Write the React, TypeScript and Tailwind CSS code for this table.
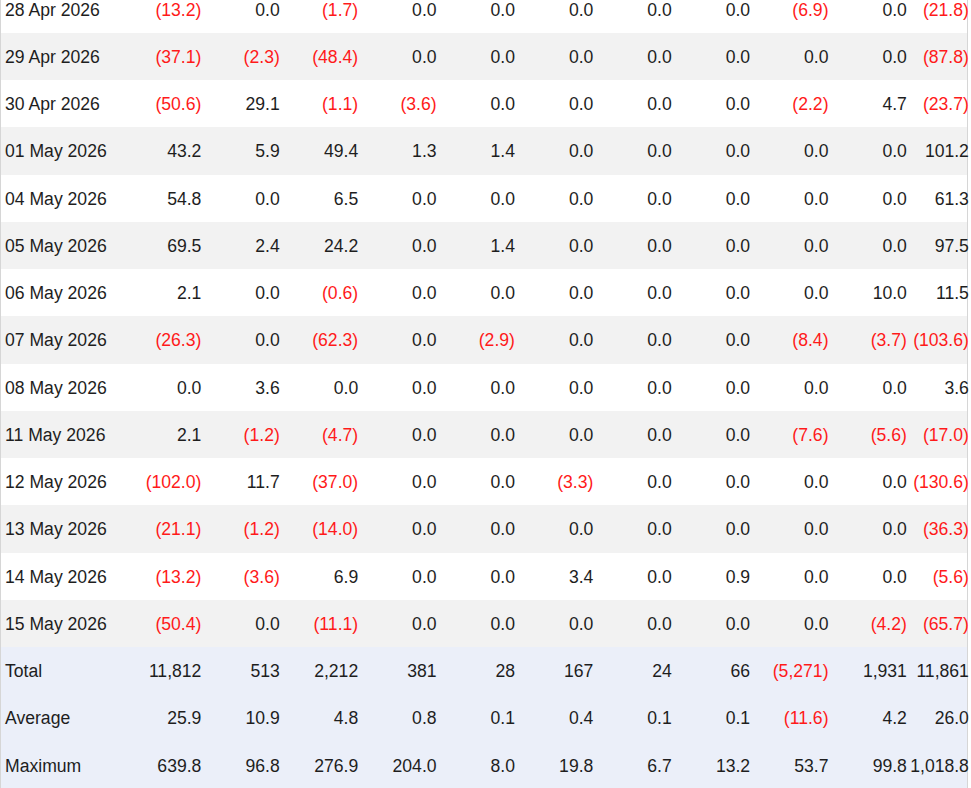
const ROWS: [string, string[]][] = [
  ["28 Apr 2026", ["(13.2)", "0.0", "(1.7)", "0.0", "0.0", "0.0", "0.0", "0.0", "(6.9)", "0.0", "(21.8)"]],
  ["29 Apr 2026", ["(37.1)", "(2.3)", "(48.4)", "0.0", "0.0", "0.0", "0.0", "0.0", "0.0", "0.0", "(87.8)"]],
  ["30 Apr 2026", ["(50.6)", "29.1", "(1.1)", "(3.6)", "0.0", "0.0", "0.0", "0.0", "(2.2)", "4.7", "(23.7)"]],
  ["01 May 2026", ["43.2", "5.9", "49.4", "1.3", "1.4", "0.0", "0.0", "0.0", "0.0", "0.0", "101.2"]],
  ["04 May 2026", ["54.8", "0.0", "6.5", "0.0", "0.0", "0.0", "0.0", "0.0", "0.0", "0.0", "61.3"]],
  ["05 May 2026", ["69.5", "2.4", "24.2", "0.0", "1.4", "0.0", "0.0", "0.0", "0.0", "0.0", "97.5"]],
  ["06 May 2026", ["2.1", "0.0", "(0.6)", "0.0", "0.0", "0.0", "0.0", "0.0", "0.0", "10.0", "11.5"]],
  ["07 May 2026", ["(26.3)", "0.0", "(62.3)", "0.0", "(2.9)", "0.0", "0.0", "0.0", "(8.4)", "(3.7)", "(103.6)"]],
  ["08 May 2026", ["0.0", "3.6", "0.0", "0.0", "0.0", "0.0", "0.0", "0.0", "0.0", "0.0", "3.6"]],
  ["11 May 2026", ["2.1", "(1.2)", "(4.7)", "0.0", "0.0", "0.0", "0.0", "0.0", "(7.6)", "(5.6)", "(17.0)"]],
  ["12 May 2026", ["(102.0)", "11.7", "(37.0)", "0.0", "0.0", "(3.3)", "0.0", "0.0", "0.0", "0.0", "(130.6)"]],
  ["13 May 2026", ["(21.1)", "(1.2)", "(14.0)", "0.0", "0.0", "0.0", "0.0", "0.0", "0.0", "0.0", "(36.3)"]],
  ["14 May 2026", ["(13.2)", "(3.6)", "6.9", "0.0", "0.0", "3.4", "0.0", "0.9", "0.0", "0.0", "(5.6)"]],
  ["15 May 2026", ["(50.4)", "0.0", "(11.1)", "0.0", "0.0", "0.0", "0.0", "0.0", "0.0", "(4.2)", "(65.7)"]],
];

const SUMMARY: [string, string[]][] = [
  ["Total", ["11,812", "513", "2,212", "381", "28", "167", "24", "66", "(5,271)", "1,931", "11,861"]],
  ["Average", ["25.9", "10.9", "4.8", "0.8", "0.1", "0.4", "0.1", "0.1", "(11.6)", "4.2", "26.0"]],
  ["Maximum", ["639.8", "96.8", "276.9", "204.0", "8.0", "19.8", "6.7", "13.2", "53.7", "99.8", "1,018.8"]],
];

function Row({ label, values, bg }: { label: string; values: string[]; bg: string }) {
  return (
    <div className={`flex h-[47.25px] items-center pt-[1.5px] ${bg}`}>
      <div className="w-[122px] shrink-0 pl-[4px] whitespace-nowrap">{label}</div>
      {values.map((v, i) => (
        <div
          key={i}
          className={`${i === 10 ? "w-[62px]" : "w-[78.4px]"} shrink-0 text-right whitespace-nowrap ${
            v.startsWith("(") ? "text-[#ff1a1a]" : "text-[#1e1e1e]"
          }`}
        >
          {v}
        </div>
      ))}
    </div>
  );
}

export default function App() {
  return (
    <div className="h-[788px] w-[971px] overflow-hidden bg-white">
      <div className="flex h-full w-[968px] flex-col border-l border-r border-[#d6d6d6] font-['Liberation_Sans',Arial,sans-serif] text-[17.6px] text-[#1e1e1e]">
        <div className="mt-[-14.5px]">
          {ROWS.map(([label, values], i) => (
            <Row key={label} label={label} values={values} bg={i % 2 === 1 ? "bg-[#f2f2f2]" : "bg-white"} />
          ))}
          {SUMMARY.map(([label, values]) => (
            <Row key={label} label={label} values={values} bg="bg-[#ebeff9]" />
          ))}
        </div>
      </div>
    </div>
  );
}
